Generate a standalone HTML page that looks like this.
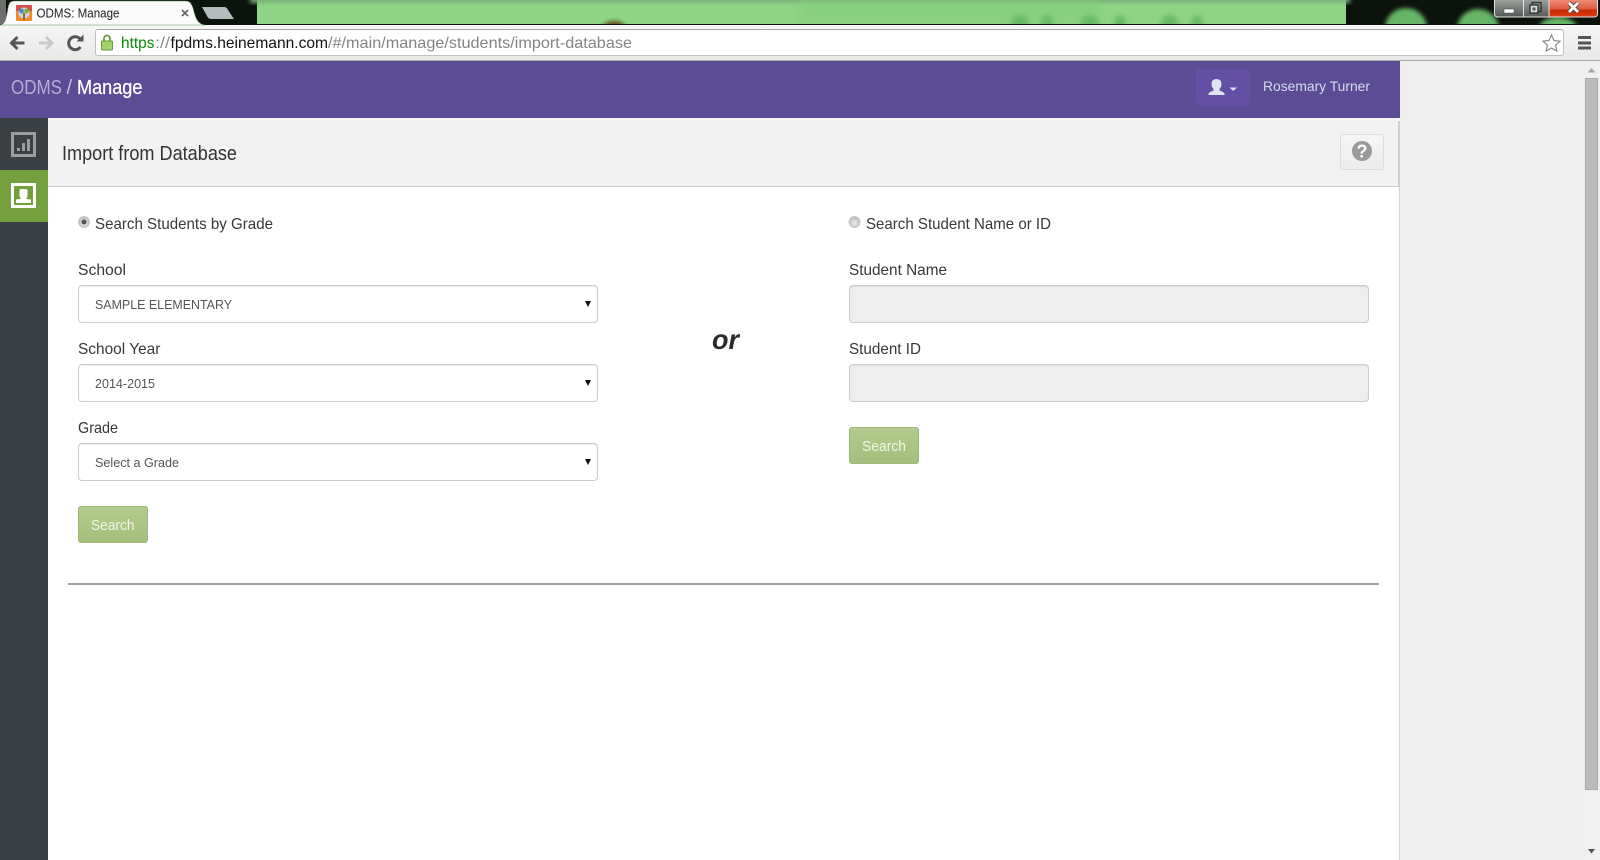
<!DOCTYPE html>
<html lang="en">
<head>
<meta charset="utf-8">
<title>ODMS: Manage</title>
<style>
html,body{margin:0;padding:0;width:1600px;height:860px;overflow:hidden;background:#fff;font-family:"Liberation Sans",sans-serif}
.b{position:absolute;box-sizing:border-box}
svg{position:absolute;left:0;top:0}
text{font-family:"Liberation Sans",sans-serif}
</style>
</head>
<body>
<div class="b" style="left:0;top:0;width:1600px;height:25px;background:#0c120c"></div>
<div class="b" style="left:0;top:25px;width:1600px;height:36px;background:linear-gradient(#f6f6f6,#e9e9e9);border-bottom:1px solid #a8a8a8"></div>
<div class="b" style="left:95px;top:29px;width:1469px;height:27px;background:#fff;border:1px solid #c0c0c0;border-top-color:#a6a6a6;border-radius:3px"></div>
<div class="b" style="left:1400px;top:61px;width:200px;height:799px;background:#eee"></div>
<div class="b" style="left:1585px;top:61px;width:15px;height:799px;background:#f0f0f0"></div>
<div class="b" style="left:1585px;top:78px;width:13px;height:712px;background:#bbb;border:1px solid #aaa"></div>
<div class="b" style="left:0;top:61px;width:1400px;height:57px;background:#5b4c95"></div>
<div class="b" style="left:1196px;top:69px;width:54px;height:37px;background:#634fa3;border-radius:4px"></div>
<div class="b" style="left:0;top:118px;width:48px;height:742px;background:#3a4043"></div>
<div class="b" style="left:0;top:170px;width:48px;height:52px;background:#739f3e"></div>
<div class="b" style="left:48px;top:118px;width:1351px;height:69px;background:#f2f2f2;border-bottom:1px solid #ccc"></div>
<div class="b" style="left:1398px;top:121px;width:2px;height:65px;background:#d0d0d0"></div>
<div class="b" style="left:1399px;top:186px;width:1px;height:674px;background:#d4d4d4"></div>
<div class="b" style="left:1340px;top:134px;width:44px;height:36px;background:linear-gradient(#f6f6f6,#ececec);border:1px solid #ddd;border-radius:3px"></div>

<div class="b" style="left:78px;top:285px;width:520px;height:38px;background:#fff;border:1px solid #ccc;border-radius:4px;box-shadow:inset 0 1px 1px rgba(0,0,0,.07)"></div>
<div class="b" style="left:78px;top:364px;width:520px;height:38px;background:#fff;border:1px solid #ccc;border-radius:4px;box-shadow:inset 0 1px 1px rgba(0,0,0,.07)"></div>
<div class="b" style="left:78px;top:443px;width:520px;height:38px;background:#fff;border:1px solid #ccc;border-radius:4px;box-shadow:inset 0 1px 1px rgba(0,0,0,.07)"></div>
<div class="b" style="left:78px;top:506px;width:70px;height:37px;background:linear-gradient(#b3cc8e,#a4bf7c);border:1px solid #a0b97a;border-radius:3px"></div>
<div class="b" style="left:849px;top:285px;width:520px;height:38px;background:#eee;border:1px solid #ccc;border-radius:4px;box-shadow:inset 0 1px 1px rgba(0,0,0,.07)"></div>
<div class="b" style="left:849px;top:364px;width:520px;height:38px;background:#eee;border:1px solid #ccc;border-radius:4px;box-shadow:inset 0 1px 1px rgba(0,0,0,.07)"></div>
<div class="b" style="left:849px;top:427px;width:70px;height:37px;background:linear-gradient(#b3cc8e,#a4bf7c);border:1px solid #a0b97a;border-radius:3px"></div>
<div class="b" style="left:68px;top:583px;width:1311px;height:2px;background:#a0a0a0"></div>

<svg width="1600" height="860" viewBox="0 0 1600 860" xmlns="http://www.w3.org/2000/svg">
<defs>
<filter id="bl" x="-60%" y="-60%" width="220%" height="220%"><feGaussianBlur stdDeviation="3"/></filter>
<filter id="bl2" x="-30%" y="-30%" width="160%" height="160%"><feGaussianBlur stdDeviation="2"/></filter>
<clipPath id="strip"><rect x="0" y="0" width="1600" height="24"/></clipPath>
<radialGradient id="rad" cx=".5" cy=".6" r=".6"><stop offset="0" stop-color="#ececec"/><stop offset="1" stop-color="#b8b8b8"/></radialGradient>
<linearGradient id="cl" x1="0" y1="0" x2="0" y2="1"><stop offset="0" stop-color="#ee8a78"/><stop offset=".55" stop-color="#e05a40"/><stop offset=".6" stop-color="#c92a08"/><stop offset="1" stop-color="#d83a10"/></linearGradient>
<linearGradient id="wb" x1="0" y1="0" x2="0" y2="1"><stop offset="0" stop-color="#a8aca8"/><stop offset="1" stop-color="#555a55"/></linearGradient>
</defs>

<!-- window strip background -->
<g clip-path="url(#strip)">
<rect x="257" y="0" width="1089" height="25" fill="#8ed484"/>
<rect x="250" y="-3" width="1100" height="6" fill="#7cb07a" filter="url(#bl2)"/>
<rect x="800" y="0" width="300" height="25" fill="#84cc7c" opacity=".5" filter="url(#bl)"/>
<ellipse cx="614" cy="29" rx="12" ry="8" fill="#5b3d10" opacity=".9" filter="url(#bl2)"/>
<g fill="#68b868" filter="url(#bl)"><ellipse cx="1020" cy="26" rx="9" ry="11"/><ellipse cx="1047" cy="26" rx="6" ry="11"/><ellipse cx="1090" cy="26" rx="9" ry="11"/><ellipse cx="1120" cy="26" rx="6" ry="11"/><ellipse cx="1170" cy="26" rx="9" ry="11"/><ellipse cx="1197" cy="26" rx="6" ry="11"/></g>
<g fill="#66b466" filter="url(#bl2)"><ellipse cx="1406" cy="28" rx="21" ry="20"/><ellipse cx="1478" cy="29" rx="21" ry="20"/><ellipse cx="1558" cy="30" rx="20" ry="13"/></g>
<rect x="0" y="0" width="6" height="25" fill="#6e6e6e"/>
<rect x="0" y="24" width="1600" height="1" fill="#5c8c58" opacity=".8"/>
</g>

<!-- active tab -->
<path d="M0 25C5 24 6 20 8 8C9 3 10 1 15 1H185C190 1 191 3 193 8C196 20 198 24 205 25Z" fill="#fafafa" stroke="#5d8f5a" stroke-width=".6"/>
<path d="M202 7H224C226 7 227 8 228 10L234 19H212C209 19 208 18 207 16Z" fill="#b4bcbd"/>
<rect x="16" y="5" width="16" height="16" rx="1" fill="#f08a2c"/>
<rect x="16" y="5" width="16" height="6" fill="#d4504a"/>
<circle cx="24" cy="13" r="5.5" fill="#c8d8e8"/>
<circle cx="21.5" cy="11" r="2.4" fill="#3f8fc7"/><circle cx="26.5" cy="11" r="2.4" fill="#7cb342"/>
<rect x="23" y="13" width="2" height="7" fill="#a0622c"/>
<text x="36.5" y="17.5" font-size="13" fill="#222" textLength="83" lengthAdjust="spacingAndGlyphs">ODMS: Manage</text>
<path d="M182 10L188 16M188 10L182 16" stroke="#666" stroke-width="1.700"/>

<!-- window controls -->
<rect x="1494.5" y="-3" width="103" height="20" rx="3" fill="url(#wb)" stroke="#e4e4e4"/>
<path d="M1549 0H1594Q1597 0 1597 3V14Q1597 16.500 1594.500 16.500H1549Z" fill="url(#cl)"/>
<path d="M1523.500 0V16.500M1549 0V16.500" stroke="#e4e4e4" stroke-width="1"/>
<rect x="1504" y="9" width="10" height="4" fill="#fff" stroke="#444" stroke-width=".5"/>
<rect x="1532" y="2.500" width="9" height="9" fill="none" stroke="#333" stroke-width="1.400"/>
<rect x="1530" y="5" width="8" height="8" fill="#ddd" stroke="#333" stroke-width="1.400"/>
<rect x="1532.500" y="7.500" width="3" height="3" fill="#555"/>
<path d="M1569 3L1578 12M1578 3L1569 12" stroke="#444" stroke-width="4.500"/>
<path d="M1569 3L1578 12M1578 3L1569 12" stroke="#fff" stroke-width="2.800"/>

<!-- nav buttons -->
<path d="M24.500 43H12M17.500 37L11.500 43L17.500 49" fill="none" stroke="#555" stroke-width="3"/>
<path d="M39 43H52M46 37L52 43L46 49" fill="none" stroke="#c8c8c8" stroke-width="3"/>
<path d="M80.500 47A6.500 6.500 0 1 1 80 38.800" fill="none" stroke="#555" stroke-width="3"/>
<path d="M76.500 41.500H83.500V34.500Z" fill="#555"/>

<!-- lock -->
<path d="M104 41V38.500A3 3 0 0 1 110 38.500V41" fill="none" stroke="#6a9a3c" stroke-width="1.800"/>
<rect x="101.500" y="41" width="11" height="9" rx="1" fill="#a3d26c" stroke="#6a9a3c"/>

<!-- URL -->
<text x="121" y="48" font-size="16" fill="#0a8a0a" textLength="33.500" lengthAdjust="spacingAndGlyphs">https</text>
<text x="155" y="48" font-size="16" fill="#8a8a8a" textLength="15" lengthAdjust="spacingAndGlyphs">://</text>
<text x="170.500" y="48" font-size="16" fill="#111" textLength="157.500" lengthAdjust="spacingAndGlyphs">fpdms.heinemann.com</text>
<text x="328" y="48" font-size="16" fill="#848484" textLength="304" lengthAdjust="spacingAndGlyphs">/#/main/manage/students/import-database</text>

<!-- star + menu -->
<path d="M1551.500 35L1554 40.500L1560 41.200L1555.600 45.200L1556.800 51L1551.500 48.100L1546.200 51L1547.400 45.200L1543 41.200L1549 40.500Z" fill="#fff" stroke="#8a8a8a" stroke-width="1.200"/>
<path d="M1578 37.500H1591M1578 43H1591M1578 48H1591" stroke="#555" stroke-width="3"/>

<!-- scrollbar arrows -->
<path d="M1587.500 72.500L1591.500 68L1595.500 72.500Z" fill="#a8a8a8"/>
<path d="M1588 849H1595L1591.500 853.500Z" fill="#505050"/>

<!-- header -->
<text x="11" y="94" font-size="20" fill="#b4aed6" textLength="51" lengthAdjust="spacingAndGlyphs">ODMS</text>
<text x="66.500" y="94" font-size="20" fill="#c4bfe0">/</text>
<text x="77" y="94" font-size="20" fill="#fff" stroke="#fff" stroke-width=".25" textLength="65.400" lengthAdjust="spacingAndGlyphs">Manage</text>
<path d="M1216.500 79C1219.800 79 1221.500 81.200 1221.500 84C1221.500 86.500 1220.500 88 1219.500 89V90.500C1221.500 91.500 1224 92 1224.500 93.800V95H1208.500V93.800C1209 92 1211.500 91.500 1213.500 90.500V89C1212.500 88 1211.500 86.500 1211.500 84C1211.500 81.200 1213.200 79 1216.500 79Z" fill="#dde3f0"/>
<path d="M1229.500 87.500H1237L1233.250 91Z" fill="#dde3f0"/>
<text x="1263" y="91" font-size="14" fill="#d5dcee" textLength="107" lengthAdjust="spacingAndGlyphs">Rosemary Turner</text>

<!-- sidebar icons -->
<rect x="12.500" y="133.500" width="22" height="22" fill="none" stroke="#9a9e9f" stroke-width="3"/>
<rect x="17" y="148" width="3" height="3" fill="#9a9e9f"/><rect x="22" y="143" width="3" height="8" fill="#9a9e9f"/><rect x="27" y="139" width="3" height="12" fill="#9a9e9f"/>
<rect x="12.500" y="184.500" width="22" height="22" fill="none" stroke="#fff" stroke-width="3"/>
<path d="M21 189H26Q27.500 189 27.500 191V196L26.500 198V199L31 199.500V203H16V199.500L20.500 199V198L19.500 196V191Q19.500 189 21 189Z" fill="#fff"/>

<!-- title -->
<text x="62" y="160" font-size="20" fill="#333" textLength="175" lengthAdjust="spacingAndGlyphs">Import from Database</text>
<circle cx="1362" cy="151" r="10" fill="#999"/>
<text x="1362" y="157.500" font-size="18" font-weight="bold" fill="#fff" text-anchor="middle">?</text>

<!-- radios -->
<circle cx="84" cy="222" r="5.500" fill="url(#rad)" stroke="#c8c8c8"/>
<circle cx="84" cy="222" r="2.500" fill="#555"/>
<circle cx="854.500" cy="222" r="5.500" fill="url(#rad)" stroke="#c8c8c8"/>

<!-- left form text -->
<g font-size="16" fill="#383838">
<text x="95" y="229" textLength="178" lengthAdjust="spacingAndGlyphs">Search Students by Grade</text>
<text x="78" y="275" textLength="48" lengthAdjust="spacingAndGlyphs">School</text>
<text x="78" y="354" textLength="82.400" lengthAdjust="spacingAndGlyphs">School Year</text>
<text x="78" y="433" textLength="40" lengthAdjust="spacingAndGlyphs">Grade</text>
<text x="866" y="229" textLength="185" lengthAdjust="spacingAndGlyphs">Search Student Name or ID</text>
<text x="849" y="275" textLength="98" lengthAdjust="spacingAndGlyphs">Student Name</text>
<text x="849" y="354" textLength="72" lengthAdjust="spacingAndGlyphs">Student ID</text>
</g>
<g font-size="13" fill="#555">
<text x="95" y="309" textLength="137" lengthAdjust="spacingAndGlyphs">SAMPLE ELEMENTARY</text>
<text x="95" y="388" textLength="60" lengthAdjust="spacingAndGlyphs">2014-2015</text>
<text x="95" y="467" textLength="84" lengthAdjust="spacingAndGlyphs">Select a Grade</text>
</g>
<g fill="#111"><path d="M585 301H591L588 307Z"/><path d="M585 380H591L588 386Z"/><path d="M585 459H591L588 465Z"/></g>
<g font-size="15" fill="#f0f5e8">
<text x="91" y="530" textLength="43.500" lengthAdjust="spacingAndGlyphs">Search</text>
<text x="862" y="451" textLength="44" lengthAdjust="spacingAndGlyphs">Search</text>
</g>
<text x="712" y="349" font-size="28" font-weight="bold" font-style="italic" fill="#2a2a2a" textLength="27" lengthAdjust="spacingAndGlyphs">or</text>
</svg>
</body>
</html>
